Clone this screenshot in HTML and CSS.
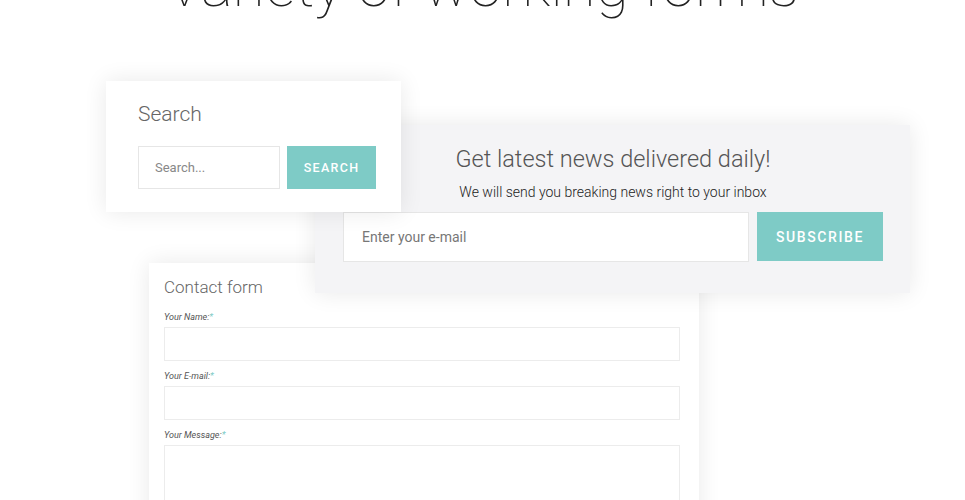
FILE: index.html
```html
<!DOCTYPE html>
<html lang="en">
<head>
    <meta charset="UTF-8">
    <meta name="viewport" content="width=device-width, initial-scale=1.0">
    <title>Variety of working forms</title>
    <link rel="stylesheet" href="styles.css">
</head>
<body>
    <h1 class="headline">Variety of working forms</h1>

    <div class="stage">
        <!-- Contact form (bottom layer) -->
        <div class="card contact-card">
            <h3 class="contact-title">Contact form</h3>
            <form class="contact-form">
                <label class="field-label">Your Name:<span class="req">*</span></label>
                <input type="text" class="field">
                <label class="field-label">Your E-mail:<span class="req">*</span></label>
                <input type="text" class="field">
                <label class="field-label">Your Message:<span class="req">*</span></label>
                <textarea class="field field-area"></textarea>
            </form>
        </div>

        <!-- Newsletter -->
        <div class="card news-card">
            <h3 class="news-title">Get latest news delivered daily!</h3>
            <p class="news-text">We will send you breaking news right to your inbox</p>
            <form class="news-form">
                <input type="text" class="news-input" placeholder="Enter your e-mail">
                <button type="button" class="btn news-btn">Subscribe</button>
            </form>
        </div>

        <!-- Search (top layer) -->
        <div class="card search-card">
            <h3 class="search-title">Search</h3>
            <form class="search-form">
                <input type="text" class="search-input" placeholder="Search...">
                <button type="button" class="btn search-btn">Search</button>
            </form>
        </div>
    </div>
</body>
</html>
```

FILE: styles.css
```css
body {
    font-family: Roboto, "Liberation Sans", sans-serif;
    margin: 0;
    padding: 0;
    background: #fff;
    overflow: hidden;
}
.headline {
    margin: -46px 0 0;
    text-align: center;
    font-size: 60px;
    font-weight: 100;
    color: #222;
    line-height: 64px;
    height: 76px;
}
.stage {
    position: relative;
    height: 470px;
    overflow: hidden;
}
.card {
    position: absolute;
    box-sizing: border-box;
    box-shadow: 0 0 22px rgba(0, 0, 0, 0.09);
}
h3 {
    margin: 0;
    font-weight: 300;
}
input, textarea, button {
    font-family: inherit;
    box-sizing: border-box;
    outline: none;
}
.btn {
    border: none;
    background-color: #7ecbc6;
    color: #fff;
    text-transform: uppercase;
    font-weight: 500;
    cursor: pointer;
}

/* search */
.search-card {
    left: 106px;
    top: 51px;
    width: 295px;
    height: 131px;
    background: #fff;
    padding: 20px 25px 0 32px;
    z-index: 3;
}
.search-title {
    font-size: 21px;
    color: #666;
    line-height: 26px;
}
.search-form {
    display: flex;
    gap: 7px;
    margin-top: 19px;
}
.search-input {
    width: 142px;
    height: 43px;
    border: 1px solid #e6e6e6;
    padding: 0 16px;
    font-size: 13px;
    color: #555;
}
.search-input::placeholder {
    color: #888;
}
.search-btn {
    width: 89px;
    height: 43px;
    font-size: 12.5px;
    letter-spacing: 1.3px;
}

/* newsletter */
.news-card {
    left: 315px;
    top: 95px;
    width: 595px;
    height: 168px;
    background: #f4f4f6;
    padding: 20px 27px 0 28px;
    z-index: 2;
    text-align: center;
}
.news-title {
    font-size: 23.5px;
    color: #555;
    line-height: 28px;
}
.news-text {
    margin: 10px 0 0;
    font-size: 14px;
    font-weight: 300;
    color: #222;
    line-height: 18px;
}
.news-form {
    display: flex;
    gap: 8px;
    margin-top: 11px;
}
.news-input {
    width: 406px;
    height: 50px;
    border: 1px solid #e6e6e6;
    background: #fff;
    padding: 0 18px;
    font-size: 14px;
}
.news-input::placeholder {
    color: #777;
}
.news-btn {
    width: 126px;
    height: 49px;
    font-size: 14px;
    letter-spacing: 1.6px;
}

/* contact */
.contact-card {
    left: 149px;
    top: 233px;
    width: 550px;
    height: 280px;
    background: #fff;
    padding: 13px 19px 0 15px;
    z-index: 1;
}
.contact-title {
    font-size: 17px;
    color: #666;
    line-height: 22px;
}
.contact-form {
    display: flex;
    flex-direction: column;
    margin-top: 13px;
}
.field-label {
    font-size: 9px;
    font-style: italic;
    color: #555;
    line-height: 12px;
    margin-bottom: 4px;
}
.req {
    color: #7ecbc6;
}
.field {
    width: 516px;
    height: 34px;
    border: 1px solid #ececec;
    margin-bottom: 9px;
}
.field-area {
    height: 80px;
    resize: none;
}
```
